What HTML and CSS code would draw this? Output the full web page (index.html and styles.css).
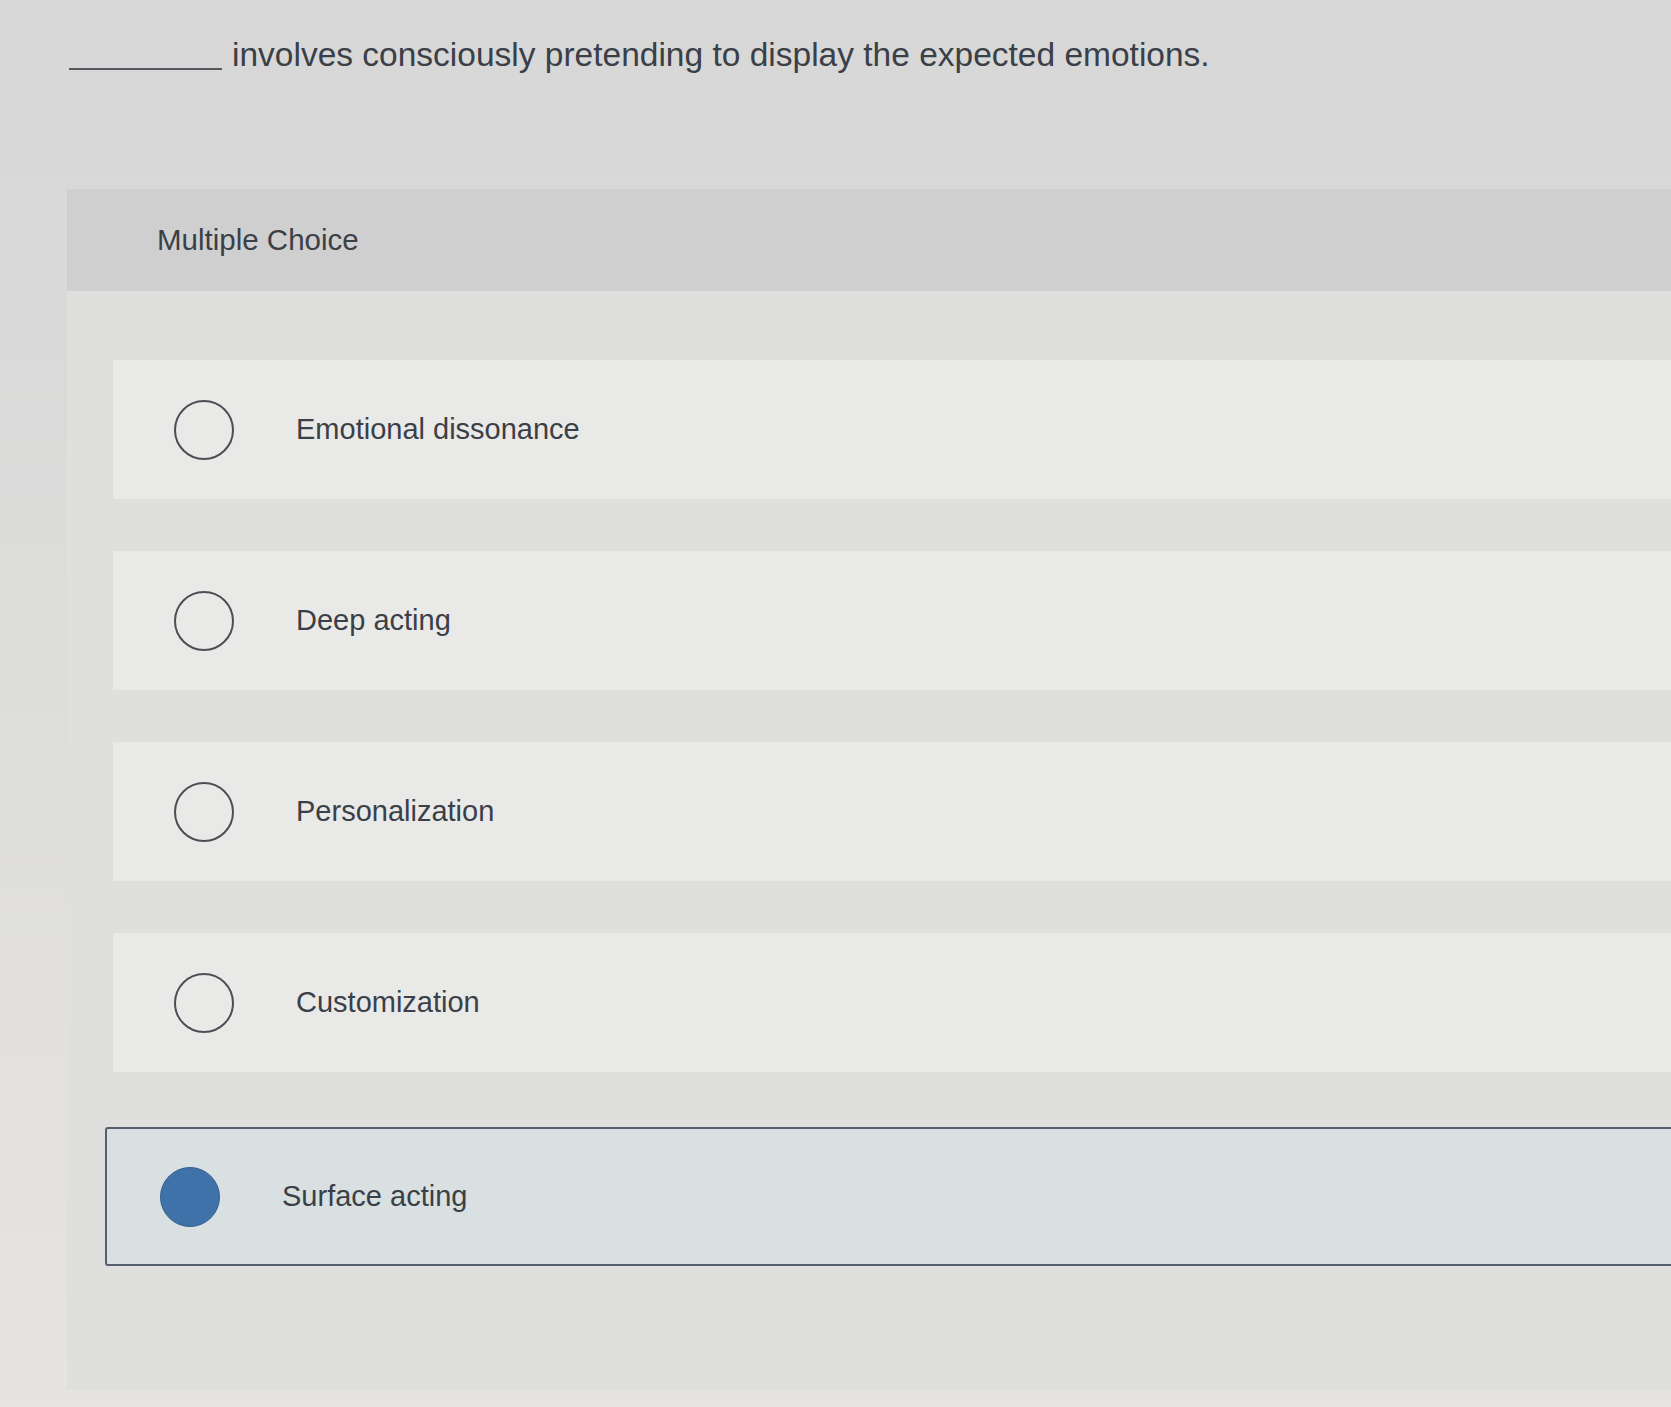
FILE: index.html
```html
<!DOCTYPE html>
<html lang="en">
<head>
    <meta charset="UTF-8">
    <meta name="viewport" content="width=device-width, initial-scale=1.0">
    <title>Multiple Choice</title>
    <link rel="stylesheet" href="styles.css">
</head>
<body>
    <p class="question">
        <span class="blank"></span>
        <span>involves consciously pretending to display the expected emotions.</span>
    </p>

    <div class="panel">
        <div class="panel-head">Multiple Choice</div>

        <div class="panel-body">
            <label class="choice">
                <span class="radio"></span>
                <span class="choice-text">Emotional dissonance</span>
            </label>
            <label class="choice">
                <span class="radio"></span>
                <span class="choice-text">Deep acting</span>
            </label>
            <label class="choice">
                <span class="radio"></span>
                <span class="choice-text">Personalization</span>
            </label>
            <label class="choice">
                <span class="radio"></span>
                <span class="choice-text">Customization</span>
            </label>
            <label class="choice selected">
                <span class="radio"></span>
                <span class="choice-text">Surface acting</span>
            </label>
        </div>
    </div>
</body>
</html>
```

FILE: styles.css
```css
body {
    margin: 0;
    font-family: 'Liberation Sans', Arial, sans-serif;
    color: #3b3f47;
    background: linear-gradient(#d7d7d7, #dcdcdb 40%, #e6e4e0);
    min-height: 1407px;
}

.question {
    margin: 0;
    padding: 34px 0 0 69px;
    height: 189px;
    box-sizing: border-box;
    display: flex;
    align-items: baseline;
    gap: 10px;
    font-size: 33.5px;
    line-height: 42px;
}

.blank {
    display: inline-block;
    width: 153px;
    border-bottom: 2px solid #55585e;
    transform: translateY(4px);
}

.panel {
    margin-left: 67px;
}

.panel-head {
    height: 102px;
    padding-left: 90px;
    display: flex;
    align-items: center;
    background-color: #cfcfcf;
    font-size: 29.5px;
}

.panel-body {
    background-color: #dfdfde;
    padding: 69px 0 124px 46px;
    display: flex;
    flex-direction: column;
    gap: 52px;
}

.choice {
    height: 139px;
    box-sizing: border-box;
    display: flex;
    align-items: center;
    padding-left: 61px;
    gap: 62px;
    background-color: #e9e9e7;
    font-size: 29px;
    cursor: pointer;
}

.radio {
    width: 60px;
    height: 60px;
    box-sizing: border-box;
    border-radius: 50%;
    border: 2px solid #4a4e55;
    flex-shrink: 0;
}

.selected {
    background-color: #d8e0e1;
    border: 2px solid #55606c;
    border-right: none;
    border-radius: 3px 0 0 3px;
    margin: 3px 0 0 -8px;
    padding-left: 53px;
}

.selected .radio {
    background-color: #3f72a9;
    border: 1px solid #35608f;
}
```
